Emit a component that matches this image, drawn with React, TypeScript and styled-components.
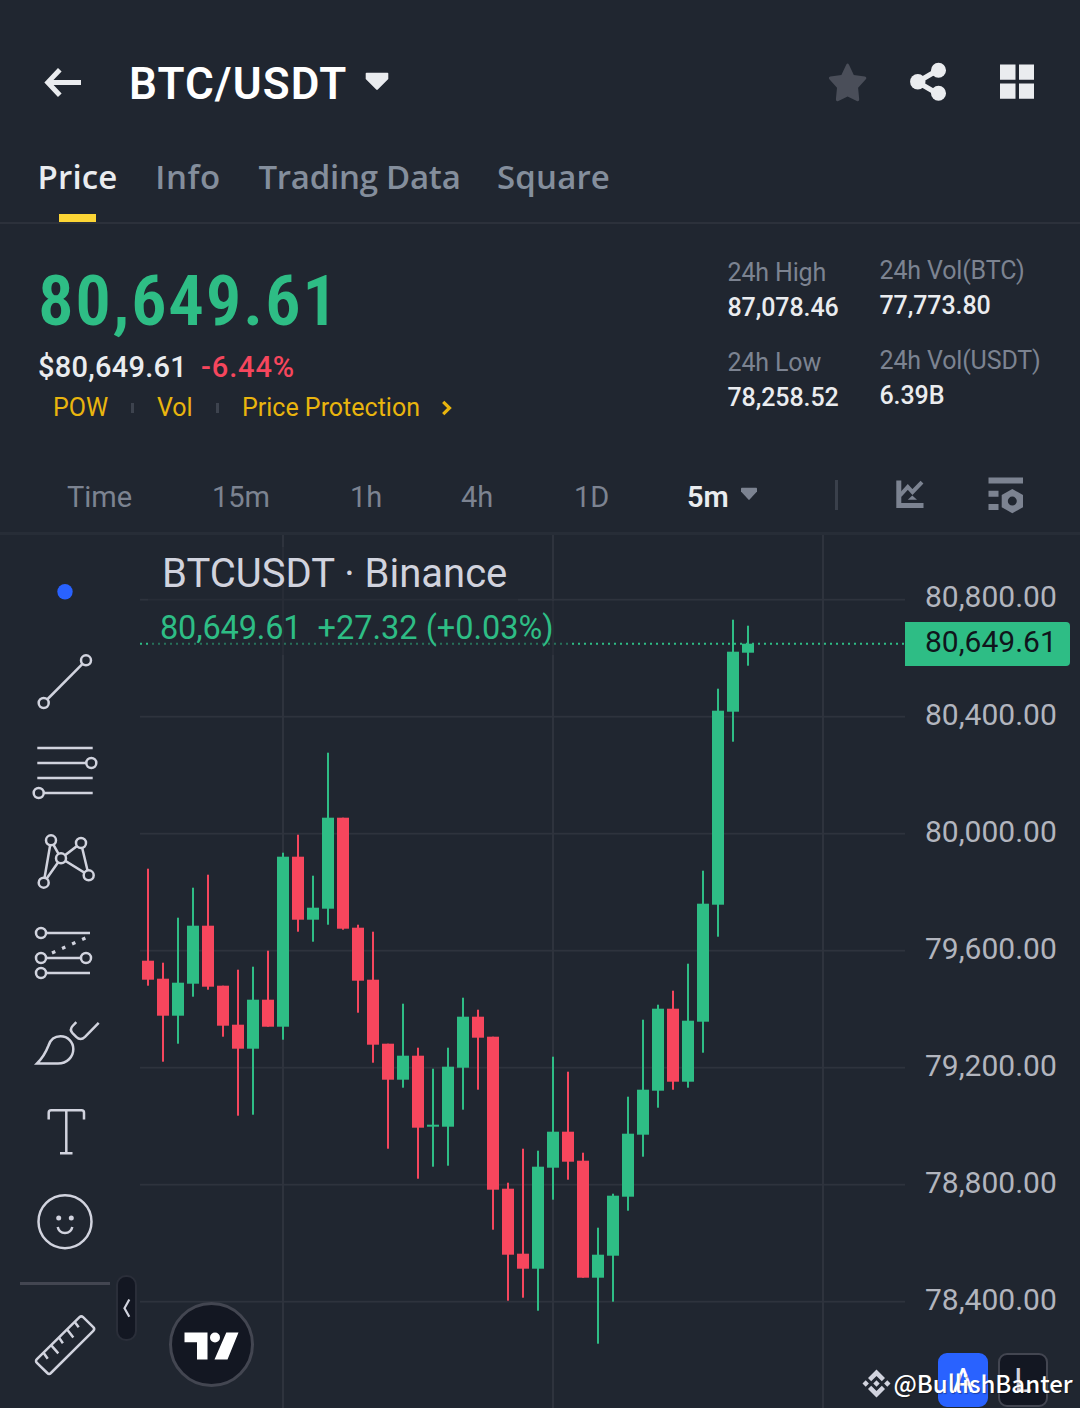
import React from 'react';
import styled, { createGlobalStyle } from 'styled-components';

const c = {
  bg: '#202630',
  text: '#eaecef',
  muted: '#848e9c',
  dim: '#7c8391',
  line: '#2c313b',
  green: '#2ebd85',
  red: '#f6465d',
  yellow: '#fcd535',
  gold: '#e9b50e',
  tool: '#d1d3de',
  blue: '#2962ff',
  panel: '#131722',
  border: '#434651',
};

const GlobalStyle = createGlobalStyle`
  * { box-sizing: border-box; }
  body { margin: 0; background: ${c.bg}; }
`;

const Screen = styled.div`
  width: 1080px;
  height: 1408px;
  overflow: hidden;
  background: ${c.bg};
  color: ${c.text};
  font-family: Roboto, 'Liberation Sans', sans-serif;
  white-space: nowrap;
  display: flex;
  flex-direction: column;
`;

/* ---------- header ---------- */

const Header = styled.header`
  flex: none;
  height: 223.5px;
  border-bottom: 2px solid ${c.line};
`;

const TopBar = styled.div`
  display: flex;
  align-items: center;
  height: 140px;
  padding: 28px 45px 0 43px;
`;

const Pair = styled.h1`
  margin: 0 18px 0 47px;
  width: 218px;
  font-size: 44px;
  line-height: 56px;
  font-weight: 600;
  letter-spacing: 1.1px;
  color: #fff;
`;

const Actions = styled.div`
  display: flex;
  align-items: center;
  margin-left: auto;
`;

const Icon = styled.svg<{ $ml?: number }>`
  display: block;
  flex: none;
  margin-left: ${p => p.$ml ?? 0}px;
`;

const Tabs = styled.nav`
  display: flex;
  gap: 37.5px;
  height: 82px;
  padding-left: 38px;
`;

const Tab = styled.div<{ $w: number; $track: number; $active?: boolean }>`
  width: ${p => p.$w}px;
  display: flex;
  flex-direction: column;
  align-items: center;
  font-family: 'Open Sans', 'Liberation Sans', sans-serif;
  font-size: 33px;
  line-height: 74px;
  font-weight: 600;
  letter-spacing: ${p => p.$track}px;
  color: ${p => (p.$active ? c.text : c.muted)};
`;

const Underline = styled.i`
  width: 37px;
  height: 8px;
  background: ${c.yellow};
`;

/* ---------- summary ---------- */

const Summary = styled.section`
  flex: none;
  display: flex;
  height: 232.5px;
  padding-left: 38px;
`;

const PriceBlock = styled.div`
  width: 689.5px;
  padding-top: 35.5px;
`;

const BigPrice = styled.div`
  font-size: 71px;
  line-height: 84px;
  font-weight: 600;
  font-stretch: 75%;
  letter-spacing: 1.65px;
  color: ${c.green};
`;

const FiatRow = styled.div`
  display: flex;
  margin-top: 4px;
  font-size: 29px;
  line-height: 40px;
  font-weight: 500;
`;

const Fiat = styled.span`
  width: 163px;
  letter-spacing: 0.25px;
`;

const Change = styled.span`
  color: ${c.red};
  letter-spacing: 0.9px;
`;

const TagRow = styled.div`
  display: flex;
  align-items: center;
  padding-left: 15px;
  font-size: 25px;
  line-height: 41px;
  color: ${c.gold};
`;

const Tag = styled.span<{ $w: number }>`
  width: ${p => p.$w}px;
`;

const TagDivider = styled.i`
  width: 3px;
  height: 10px;
  margin-right: 23px;
  background: #3d434e;
`;

const StatColumn = styled.dl<{ $w: number; $top: number }>`
  width: ${p => p.$w}px;
  margin: 0;
  padding-top: ${p => p.$top}px;
`;

const Stat = styled.div`
  margin-bottom: 20px;
  font-size: 25px;
  line-height: 35px;
`;

const StatName = styled.dt`
  color: ${c.dim};
  letter-spacing: -0.15px;
`;

const StatValue = styled.dd`
  margin: 0;
  font-weight: 500;
  letter-spacing: -0.1px;
`;

/* ---------- intervals ---------- */

const Intervals = styled.div`
  flex: none;
  display: flex;
  align-items: center;
  height: 79px;
  padding: 6px 0 0 67px;
  border-bottom: 3px solid #272d37;
  font-size: 29px;
  color: ${c.dim};
`;

const Interval = styled.span<{ $w: number; $active?: boolean }>`
  width: ${p => p.$w}px;
  line-height: 40px;
  font-weight: ${p => (p.$active ? 600 : 400)};
  color: ${p => (p.$active ? c.text : 'inherit')};
`;

const IntervalDivider = styled.i`
  width: 3px;
  height: 30px;
  margin: -4px 0 0 78px;
  background: #3a404b;
`;

/* ---------- chart ---------- */

const ChartArea = styled.main`
  position: relative;
  flex: 1;
  display: flex;
  min-height: 0;
`;

const Toolbar = styled.aside`
  width: 140px;
  padding-top: 12px;
`;

const Tool = styled.div`
  display: flex;
  align-items: center;
  width: 130px;
  height: 90px;
  justify-content: center;
`;

const ToolDivider = styled.hr`
  width: 90px;
  height: 3px;
  margin: 15px 0 15px 20px;
  border: 0;
  background: ${c.border};
`;

const Plot = styled.div`
  position: relative;
  width: 765px;
`;

const Legend = styled.div`
  position: absolute;
  left: 8px;
  top: 12px;
  display: flex;
  flex-direction: column;
  align-items: flex-start;
`;

const LegendTitle = styled.div`
  padding: 0 11px 0 14px;
  font-size: 40px;
  line-height: 54px;
  color: ${c.tool};
  background: rgba(32, 38, 48, 0.5);
`;

const LegendValues = styled.div`
  display: flex;
  padding: 0 18px 0 12px;
  font-size: 32.5px;
  line-height: 54px;
  color: ${c.green};
  background: rgba(32, 38, 48, 0.5);
`;

const LegendValue = styled.span<{ $w?: number }>`
  width: ${p => (p.$w ? `${p.$w}px` : 'auto')};
  letter-spacing: ${p => (p.$w ? '-0.15px' : '0')};
`;

const Axis = styled.div`
  width: 175px;
  padding: 4px 0 0 20px;
  font-size: 30px;
  color: #b2b5be;
`;

const AxisLabel = styled.div`
  line-height: 117px;

  &:first-child {
    margin-top: -1px;
    padding-bottom: 1px;
  }
`;

const LastPrice = styled.div`
  position: absolute;
  left: 905px;
  top: 87px;
  width: 165px;
  height: 44px;
  padding-left: 20px;
  border-radius: 0 4px 4px 0;
  font-size: 30px;
  line-height: 40px;
  color: #10151c;
  background: ${c.green};
`;

const Collapse = styled.div`
  position: absolute;
  left: 116px;
  top: 740px;
  width: 21px;
  height: 66px;
  display: flex;
  align-items: center;
  justify-content: center;
  border: 2px solid #2a2e39;
  border-radius: 10px;
  background: ${c.panel};
`;

const BrandBadge = styled.div`
  position: absolute;
  left: 168.5px;
  top: 766.5px;
  width: 85px;
  height: 85px;
  display: flex;
  align-items: center;
  justify-content: center;
  padding-top: 3px;
  border: 3px solid ${c.border};
  border-radius: 50%;
  background: ${c.panel};
`;

const ScaleButtons = styled.div`
  position: absolute;
  left: 938px;
  top: 818px;
  display: flex;
  gap: 10px;
`;

const ScaleButton = styled.div<{ $on?: boolean }>`
  width: 50px;
  height: 54px;
  border: 2px solid ${p => (p.$on ? c.blue : c.border)};
  border-radius: 9px;
  font-size: 33px;
  line-height: 51px;
  text-align: center;
  color: ${p => (p.$on ? '#fff' : c.tool)};
  background: ${p => (p.$on ? c.blue : c.panel)};
`;

const Watermark = styled.div`
  position: absolute;
  left: 861.5px;
  top: 829px;
  display: flex;
  align-items: center;
  gap: 3px;
  font-family: 'Noto Sans CJK SC', 'Noto Sans', sans-serif;
  font-size: 24px;
  line-height: 38px;
  font-weight: 500;
  color: #fff;
  text-shadow: 1px 1px 1px rgba(0, 0, 0, 0.35);
`;

/* ---------- data ---------- */

type Candle = [up: 0 | 1, high: number, top: number, bottom: number, low: number];

const candles: Candle[] = [
  [0, 868, 960, 980, 986], [0, 962, 978, 1016, 1062], [1, 917, 982, 1016, 1044],
  [1, 887, 925, 984, 997], [0, 874, 925, 987, 990], [0, 985, 985, 1026, 1037],
  [0, 969, 1024, 1049, 1116], [1, 966, 999, 1049, 1115], [0, 950, 999, 1027, 1027],
  [1, 852, 856, 1027, 1040], [0, 834, 856, 920, 932], [1, 875, 907, 920, 942],
  [1, 752, 817, 909, 925], [0, 817, 817, 929, 930], [0, 924, 927, 981, 1013],
  [0, 931, 979, 1045, 1063], [0, 1043, 1043, 1080, 1149], [1, 1003, 1055, 1080, 1088],
  [0, 1047, 1055, 1128, 1179], [1, 1068, 1124, 1127, 1167], [1, 1047, 1066, 1127, 1166],
  [1, 997, 1016, 1068, 1110], [0, 1009, 1016, 1038, 1090], [0, 1036, 1036, 1190, 1230],
  [0, 1182, 1188, 1255, 1301], [0, 1148, 1253, 1269, 1298], [1, 1150, 1166, 1269, 1311],
  [1, 1056, 1131, 1168, 1200], [0, 1071, 1131, 1162, 1180], [0, 1152, 1160, 1278, 1278],
  [1, 1227, 1254, 1278, 1344], [1, 1193, 1195, 1256, 1302], [1, 1096, 1133, 1197, 1211],
  [1, 1019, 1089, 1135, 1157], [1, 1004, 1008, 1091, 1108], [0, 990, 1008, 1082, 1090],
  [1, 963, 1020, 1082, 1088], [1, 870, 903, 1022, 1053], [1, 688, 710, 905, 937],
  [1, 619, 651, 712, 742], [1, 625, 643, 653, 666],
];

const ticks = ['80,800.00', '80,400.00', '80,000.00', '79,600.00', '79,200.00', '78,800.00', '78,400.00'];

const TOP = 535;

const PlotSvg = styled.svg`
  display: block;
`;

function CandleChart() {
  return (
    <PlotSvg width="765" height="873">
      {ticks.map((t, i) => (
        <rect key={t} x="0" y={598.8 + i * 117 - TOP} width="765" height="1.8" fill="#2e333d" />
      ))}
      {[142, 412, 682].map(x => (
        <rect key={x} x={x} y="0" width="2" height="873" fill="#2e333d" />
      ))}
      <line x1="0" x2="765" y1="108.7" y2="108.7" stroke={c.green} strokeWidth="2" strokeDasharray="2 4" />
      {candles.map(([up, high, top, bottom, low], i) => {
        const x = 8 + i * 15;
        return (
          <g key={i} fill={up ? c.green : c.red}>
            <rect x={x - 1} y={high + 0.7 - TOP} width="2" height={low - high - 1} />
            <rect x={x - 6} y={top + 0.7 - TOP} width="12" height={bottom - top - 1} />
          </g>
        );
      })}
    </PlotSvg>
  );
}

function ToolIcon({ children }: { children: React.ReactNode }) {
  return (
    <Tool>
      <svg width="70" height="70" viewBox="0 0 70 70" fill="none" stroke={c.tool} strokeWidth="2.5">
        {children}
      </svg>
    </Tool>
  );
}

const Ring = ({ x, y }: { x: number; y: number }) => <circle cx={x} cy={y} r="5" fill={c.bg} />;

export default function App() {
  return (
    <Screen>
      <GlobalStyle />
      <Header>
        <TopBar>
          <Icon width="39" height="40" viewBox="0 0 39 40" fill="none" stroke={c.text} strokeWidth="5">
            <path d="M38 18.4H5M16.8 5.7 4.8 18.4 16.8 31.2" />
          </Icon>
          <Pair>BTC/USDT</Pair>
          <Icon width="24" height="40" viewBox="0 0 24 40" fill={c.text}>
            <path d="M1.5 8.7h21a.8.8 0 0 1 .8.8V15L12.8 25.6q-.8.8-1.6 0L.7 15V9.5a.8.8 0 0 1 .8-.8Z" />
          </Icon>
          <Actions>
            <Icon width="40" height="48" viewBox="0 0 40 48" fill="#4a4e59">
              <path d="M18.2 4.7q1.4-2.3 2.8 0l4.8 10.4 11 1.4q2.6.7.8 3l-7.5 8.2 1.1 11.6q0 2.600-2.400 1.700l-9.200-4.500-9.200 4.500q-2.500.9-2.500-1.700L9 27.700 1.600 19.500q-1.800-2.300.8-3l11-1.400Z" />
            </Icon>
            <Icon $ml={41} width="38" height="48" viewBox="0 0 38 48" fill={c.text}>
              <path d="M8.5 22 29 10M8.5 22 29 34" stroke={c.text} strokeWidth="5" />
              <circle cx="8.8" cy="21.8" r="7.7" />
              <circle cx="29.5" cy="10.2" r="7.5" />
              <circle cx="29.5" cy="33.2" r="7.5" />
            </Icon>
            <Icon $ml={53.5} width="35" height="48" viewBox="0 0 35 48" fill={c.text}>
              <path d="M0 4.5h15.500v15.200H0zM19 4.5h15v15.200H19zM0 23.5h15.500v15.200H0zM19 23.5h15v15.200H19z" />
            </Icon>
          </Actions>
        </TopBar>
        <Tabs>
          <Tab $w={79} $track={0.15} $active>Price<Underline /></Tab>
          <Tab $w={67} $track={0.6}>Info</Tab>
          <Tab $w={201} $track={-0.25}>Trading Data</Tab>
          <Tab $w={112} $track={0.15}>Square</Tab>
        </Tabs>
      </Header>

      <Summary>
        <PriceBlock>
          <BigPrice>80,649.61</BigPrice>
          <FiatRow>
            <Fiat>$80,649.61</Fiat>
            <Change>-6.44%</Change>
          </FiatRow>
          <TagRow>
            <Tag $w={78}>POW</Tag>
            <TagDivider />
            <Tag $w={59}>Vol</Tag>
            <TagDivider />
            <Tag $w={198.5}>Price Protection</Tag>
            <svg width="12" height="16" viewBox="0 0 12 16" fill="none" stroke={c.gold} strokeWidth="3.2">
              <path d="M2.2 1.8 8.5 8 2.2 14.2" />
            </svg>
          </TagRow>
        </PriceBlock>
        <StatColumn $w={152} $top={31.5}>
          <Stat><StatName>24h High</StatName><StatValue>87,078.46</StatValue></Stat>
          <Stat><StatName>24h Low</StatName><StatValue>78,258.52</StatValue></Stat>
        </StatColumn>
        <StatColumn $w={180} $top={29.5}>
          <Stat><StatName>24h Vol(BTC)</StatName><StatValue>77,773.80</StatValue></Stat>
          <Stat><StatName>24h Vol(USDT)</StatName><StatValue>6.39B</StatValue></Stat>
        </StatColumn>
      </Summary>

      <Intervals>
        <Interval $w={145}>Time</Interval>
        <Interval $w={138}>15m</Interval>
        <Interval $w={111}>1h</Interval>
        <Interval $w={113}>4h</Interval>
        <Interval $w={113}>1D</Interval>
        <Interval $w={54} $active>5m</Interval>
        <Icon width="16" height="40" viewBox="0 0 16 40" fill={c.dim}>
          <path d="M.8 10.7h14.400q.8 0 .8.8v3L8.600 22.600q-.6.6-1.200 0L0 14.500v-3q0-.8.8-.8Z" />
        </Icon>
        <IntervalDivider />
        <Icon $ml={58} width="28" height="40" viewBox="0 0 28 40" fill="none" stroke={c.dim} strokeWidth="5">
          <path d="M2.8 3.500V28.500H27.500" />
          <path d="M4 18.500 11.800 10 16.500 15 26 5.200" strokeWidth="4" />
          <path d="M16.300 18.500 21 22.800H11.800Z" fill={c.dim} stroke="none" />
        </Icon>
        <Icon $ml={63.5} width="36" height="40" viewBox="0 0 36 40" fill={c.dim}>
          <path d="M.5.5h34.500v6H.5zM.5 13.700h10v6h-10zM.5 27h10v6h-10z" />
          <path fillRule="evenodd" d="M24.300 12 35 18v12.200L24.300 36.200 13.700 30.200V18ZM24.300 19.600a4.500 4.500 0 1 0 0 9 4.500 4.500 0 0 0 0-9Z" />
        </Icon>
      </Intervals>

      <ChartArea>
        <Toolbar>
          <ToolIcon><circle cx="35" cy="34.700" r="7.700" fill={c.blue} stroke="none" /></ToolIcon>
          <ToolIcon>
            <path d="M56 13.300 13.700 56" />
            <Ring x={56} y={13.3} /><Ring x={13.7} y={56} />
          </ToolIcon>
          <ToolIcon>
            <path d="M7.300 11h55.400M7.300 26h55.400M7.300 41h55.400M7.300 56h55.400" />
            <Ring x={61.3} y={26} /><Ring x={8.7} y={56} />
          </ToolIcon>
          <ToolIcon>
            <path d="M13.700 55.700 21 13.300 31 31.300 51 16 58.700 48.300 31 31.300Z" />
            <Ring x={21} y={13.3} /><Ring x={51} y={16} /><Ring x={31} y={31.3} />
            <Ring x={58.7} y={48.3} /><Ring x={13.7} y={55.7} />
          </ToolIcon>
          <ToolIcon>
            <path d="M11 16h49M11 41h45M11 56h49" />
            <path d="M22 36 56 20.800" strokeWidth="3.200" strokeDasharray="3.600 7.400" />
            <Ring x={11} y={16} /><Ring x={11} y={41} /><Ring x={11} y={56} /><Ring x={56} y={41} />
          </ToolIcon>
          <ToolIcon>
            <path d="M7 56.500C12.500 51 16 45 18.500 38.500 20.500 32.500 25 29.300 30.500 29.300 38 29.300 43.300 35 43.300 42 43.300 50 37 56.500 28 56.500Z" />
            <path d="M46.300 15.200 42.600 19c-2.100 2.300-2.100 4.700-.3 6.800l3.900 4.100c3 2.900 5.800 2.900 8.800 0L68.700 15.800" />
          </ToolIcon>
          <ToolIcon>
            <path d="M18.700 22.500V15.700Q18.700 13.200 21.200 13.200H51.500Q54 13.200 54 15.700V22.500M36.300 13.200V56.200M30 56.200H42.500" />
          </ToolIcon>
          <ToolIcon>
            <circle cx="35" cy="34.700" r="26.500" />
            <circle cx="28.700" cy="31" r="2.500" fill={c.tool} stroke="none" />
            <circle cx="41.300" cy="31" r="2.500" fill={c.tool} stroke="none" />
            <path d="M27.700 40C29.500 48 40.500 48 42.300 40" />
          </ToolIcon>
          <ToolDivider />
          <ToolIcon>
            <path d="M49.500 7.200q1.800-1.700 3.600 0l10.200 10q1.800 1.800 0 3.600L20.900 63q-1.800 1.800-3.600 0L6.900 52.800q-1.800-1.800 0-3.600Z" />
            <path d="M44.700 12l4 5.300M37.100 19.400l6.200 8.200M29 27.600l3.900 5.600M21.300 35.400l7 7.900M13.700 43l4 5.700" />
          </ToolIcon>
        </Toolbar>

        <Plot>
          <CandleChart />
          <Legend>
            <LegendTitle>BTCUSDT · Binance</LegendTitle>
            <LegendValues>
              <LegendValue $w={157.5}>80,649.61</LegendValue>
              <LegendValue>+27.32 (+0.03%)</LegendValue>
            </LegendValues>
          </Legend>
        </Plot>

        <Axis>
          {ticks.map(t => <AxisLabel key={t}>{t}</AxisLabel>)}
        </Axis>

        <LastPrice>80,649.61</LastPrice>
        <Collapse>
          <svg width="8" height="20" viewBox="0 0 8 20" fill="none" stroke={c.tool} strokeWidth="2.2">
            <path d="M6.300 1.500 1.500 10.200 6.300 18.700" />
          </svg>
        </Collapse>
        <BrandBadge>
          <svg width="56" height="28" viewBox="0 0 56 28" fill="#fff">
            <path d="M1.500.5H24.500V27.500H14V10.200H1.500ZM43.300.5H55.500L44.500 27.500H31.500Z" />
            <circle cx="32" cy="5.500" r="5" />
          </svg>
        </BrandBadge>
        <ScaleButtons>
          <ScaleButton $on>A</ScaleButton>
          <ScaleButton>L</ScaleButton>
        </ScaleButtons>
        <Watermark>
          <svg width="29" height="29" viewBox="0 0 29 29" fill={c.tool}>
            <path d="M14.500.5 23 9l-3.200 3.200-5.300-5.300-5.300 5.300L6 9ZM14.500 28.500 23 20l-3.200-3.200-5.300 5.300-5.300-5.300L6 20ZM3.700 11.300l3.200 3.200-3.200 3.200L.5 14.500ZM25.300 11.300l3.200 3.200-3.200 3.200-3.200-3.200ZM14.500 11.300l3.200 3.200-3.200 3.200-3.200-3.200Z" />
          </svg>
          @BullishBanter
        </Watermark>
      </ChartArea>
    </Screen>
  );
}
